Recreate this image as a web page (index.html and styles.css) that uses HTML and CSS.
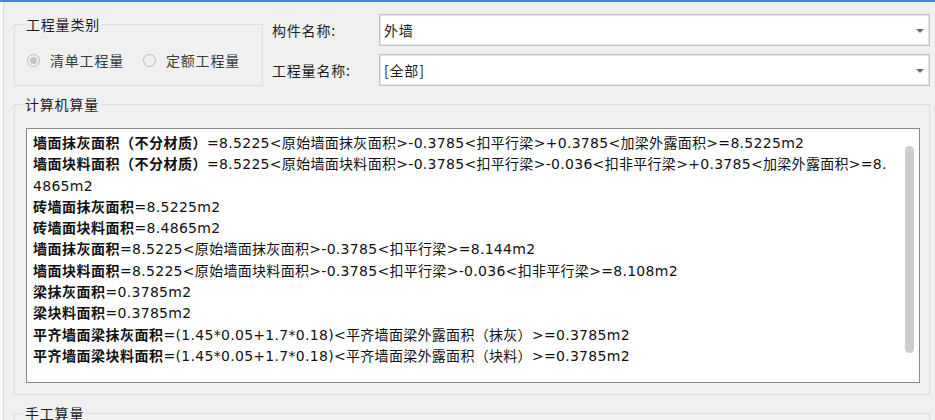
FILE: index.html
```html
<!DOCTYPE html>
<html>
<head>
    <link rel="stylesheet" href="styles.css">
</head>
<body>
    <div class="topbar"></div>
    <div class="window">
        <div class="sidebar"></div>
        <div class="main">
            <div class="head">
                <fieldset class="group kind">
                    <legend>工程量类别</legend>
                    <div class="radios">
                        <label class="radio"><span class="dot checked"></span>清单工程量</label>
                        <label class="radio"><span class="dot"></span>定额工程量</label>
                    </div>
                </fieldset>
                <div class="fields">
                    <div class="field">
                        <span class="field_label">构件名称:</span>
                        <div class="combo"><span>外墙</span><span class="arrow"></span></div>
                    </div>
                    <div class="field">
                        <span class="field_label">工程量名称:</span>
                        <div class="combo"><span>[全部]</span><span class="arrow"></span></div>
                    </div>
                </div>
            </div>

            <fieldset class="group calc">
                <legend>计算机算量</legend>
                <div class="textbox">
                    <div class="lines">
                        <div><b>墙面抹灰面积（不分材质）</b>=8.5225&lt;原始墙面抹灰面积&gt;-0.3785&lt;扣平行梁&gt;+0.3785&lt;加梁外露面积&gt;=8.5225m2</div>
                        <div><b>墙面块料面积（不分材质）</b>=8.5225&lt;原始墙面块料面积&gt;-0.3785&lt;扣平行梁&gt;-0.036&lt;扣非平行梁&gt;+0.3785&lt;加梁外露面积&gt;=8.4865m2</div>
                        <div><b>砖墙面抹灰面积</b>=8.5225m2</div>
                        <div><b>砖墙面块料面积</b>=8.4865m2</div>
                        <div><b>墙面抹灰面积</b>=8.5225&lt;原始墙面抹灰面积&gt;-0.3785&lt;扣平行梁&gt;=8.144m2</div>
                        <div><b>墙面块料面积</b>=8.5225&lt;原始墙面块料面积&gt;-0.3785&lt;扣平行梁&gt;-0.036&lt;扣非平行梁&gt;=8.108m2</div>
                        <div><b>梁抹灰面积</b>=0.3785m2</div>
                        <div><b>梁块料面积</b>=0.3785m2</div>
                        <div><b>平齐墙面梁抹灰面积</b>=(1.45*0.05+1.7*0.18)&lt;平齐墙面梁外露面积（抹灰）&gt;=0.3785m2</div>
                        <div><b>平齐墙面梁块料面积</b>=(1.45*0.05+1.7*0.18)&lt;平齐墙面梁外露面积（块料）&gt;=0.3785m2</div>
                    </div>
                    <div class="track"><div class="thumb"></div></div>
                </div>
            </fieldset>

            <fieldset class="group manual">
                <legend>手工算量</legend>
                <div class="manual_body"></div>
            </fieldset>
        </div>
    </div>
</body>
</html>
```

FILE: styles.css
```css
html, body {
    margin: 0;
    padding: 0;
    height: 420px;
    overflow: hidden;
}
body {
    background-color: #f0f0f0;
    font-family: "Microsoft YaHei", "Noto Sans CJK SC", sans-serif;
    font-size: 14px;
    letter-spacing: 0.8px;
    color: #1c1c1c;
}
.topbar {
    height: 2px;
    background-color: #3d8ae0;
}
.window {
    display: flex;
    height: 418px;
}
.sidebar {
    width: 3px;
    background-color: #fafafa;
    border-right: 1px solid #d6d6d6;
}
.main {
    flex: 1;
    padding: 0 5px 0 10px;
}
.head {
    display: flex;
    margin-top: 12px;
}

/* group boxes */
.group {
    margin: 0;
    border: 1px solid #dcdcdc;
    min-width: 0;
}
.group legend {
    padding: 0 2px;
    margin-left: -3px;
    line-height: 18px;
    height: 18px;
}
.kind {
    width: 249px;
    box-sizing: border-box;
    margin-top: 1px;
    height: 71px;
    padding: 18px 12px 0 12px;
}
.radios {
    display: flex;
    gap: 10px;
    color: #3a3a3a;
}
.radio {
    display: flex;
    align-items: center;
    height: 18px;
    width: 106px;
}
.dot {
    width: 13px;
    height: 13px;
    box-sizing: border-box;
    border: 1px solid #bcbcbc;
    border-radius: 50%;
    margin-right: 10px;
    display: flex;
    align-items: center;
    justify-content: center;
}
.dot.checked::after {
    content: "";
    width: 7px;
    height: 7px;
    border-radius: 50%;
    background-color: #c4c4c4;
}

/* name fields */
.fields {
    flex: 1;
    margin-left: 9px;
    display: flex;
    flex-direction: column;
    gap: 8px;
}
.field {
    display: flex;
    align-items: center;
    height: 32px;
}
.field_label {
    width: 107px;
}
.combo {
    flex: 1;
    height: 32px;
    box-sizing: border-box;
    border: 1px solid #c2c2c2;
    box-shadow: inset 0 0 0 1px #e6e6e6;
    background-color: #fff;
    display: flex;
    align-items: center;
    justify-content: space-between;
    padding: 0 5px 0 4px;
}
.arrow {
    width: 0;
    height: 0;
    border-left: 4px solid transparent;
    border-right: 4px solid transparent;
    border-top: 4px solid #6a6a6a;
    margin-top: 2px;
}

/* computer result */
.calc {
    margin-top: 9px;
    height: 300px;
    box-sizing: border-box;
    padding: 15px 9px 11px 11px;
}
.textbox {
    display: flex;
    height: 255px;
    box-sizing: border-box;
    border: 1px solid #8a8a8a;
    background-color: #fff;
}
.lines {
    flex: 1;
    padding: 4px 4px 0 6px;
    font-family: "DejaVu Sans", "Noto Sans CJK SC", sans-serif;
    line-height: 21.3px;
    letter-spacing: 0.3px;
    word-break: break-all;
    color: #111;
}
.lines b {
    font-family: "Noto Sans CJK SC", sans-serif;
    font-weight: bold;
    line-height: 1;
    letter-spacing: 0.5px;
}
.track {
    width: 24px;
    padding-top: 17px;
}
.thumb {
    width: 9px;
    height: 207px;
    margin-left: 10px;
    border-radius: 5px;
    background-color: #cdcdcd;
}

.manual {
    margin-top: 9px;
    padding: 0 9px 0 11px;
}
.manual_body {
    height: 40px;
}
```
